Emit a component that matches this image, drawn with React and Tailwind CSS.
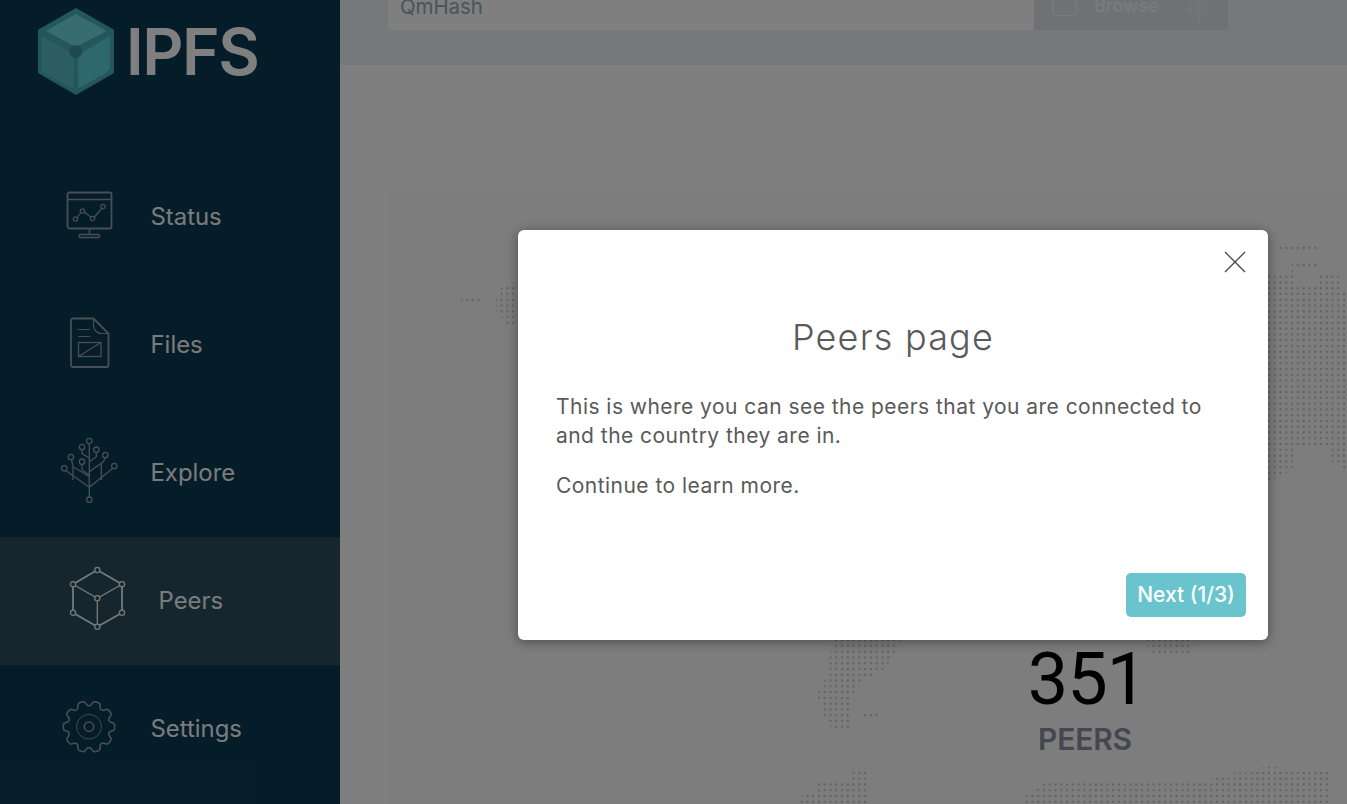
import React from "react";

const INACTIVE = "#8e9ea8";
const ACTIVE = "#f2f2f2";

function Logo() {
  return (
    <svg width="76" height="87" viewBox="0 0 76 87" className="shrink-0">
      <polygon points="38,0 76,21.7 76,65 38,87 0,65 0,21.7" fill="#48aeb6" />
      <polygon points="37.7,6 68.7,23 37.7,39 8,23" fill="#6edade" />
      <polygon points="3.7,28 31,43.7 35.3,50.3 35.3,80.3 3.7,63.7" fill="#5abcc4" />
      <polygon points="40.3,50.3 45.3,43.7 72,28 72,60.3 68,65.3 40.3,80.3" fill="#5ed0d8" />
      <circle cx="37.7" cy="43.7" r="6.5" fill="#3e94a0" />
    </svg>
  );
}

function StatusIcon({ color }) {
  const pts = [[16.5, 32], [23.5, 24], [33.5, 31.5], [44, 19.5]];
  return (
    <svg width="60" height="60" viewBox="0 0 60 60" fill="none" stroke={color} className="shrink-0 overflow-visible">
      <rect x="8.5" y="5.5" width="44" height="36" rx="2" strokeWidth="1.8" />
      <path d="M8.5 12.5H52.5M30.5 41.5V47.5" strokeWidth="1.5" />
      <rect x="20" y="47.5" width="20.5" height="3" rx="1.2" strokeWidth="1.4" />
      <path d="M18 30.5L22 25.5M25.5 25L31.5 30M35.5 30L42.5 21.5" strokeWidth="1.2" />
      {pts.map(([x, y]) => (
        <circle key={x} cx={x} cy={y} r="2.2" strokeWidth="1.2" />
      ))}
    </svg>
  );
}

function FilesIcon({ color }) {
  return (
    <svg width="60" height="60" viewBox="0 0 60 60" fill="none" stroke={color} className="shrink-0 overflow-visible">
      <path d="M14 3.5H34.5L49.5 18.5V50A2 2 0 0 1 47.5 52H14A2 2 0 0 1 12 50V5.5A2 2 0 0 1 14 3.5Z" strokeWidth="1.8" />
      <path d="M34.5 3.5V10A8 8 0 0 0 42.5 18.5H49.5" strokeWidth="1.2" />
      <path d="M19 14.5H31M19 21.5H31" strokeWidth="1.2" />
      <rect x="19.5" y="27.5" width="22.5" height="14" strokeWidth="1.3" />
      <path d="M19.5 41.5L42 27.5" strokeWidth="1.2" />
    </svg>
  );
}

function TreeIcon({ color, size = 60, strokeWidth = 1.3 }) {
  const circles = [[30.3, -2], [23, 4], [37.3, 6.7], [46.3, 12], [55.3, 23], [12, 14], [5.3, 25.3], [23, 18.7], [30.3, 56.7]];
  return (
    <svg width={size} height={size} viewBox="0 0 60 60" fill="none" stroke={color} strokeWidth={strokeWidth} className="shrink-0 overflow-visible">
      <path d="M30.3 .7V54M7 27.7L30.3 44.3M53.5 25.5L30.3 44.3M12.5 16.7L14 23.7L30.3 33.7M14 23.7V37M46.3 14.7L44.3 18.7L30.3 28.7M42.3 20.3V37M23 21.3V27L30.3 32M23 6.7V10.3L30.3 15.3M37.3 9.3V13.7L30.3 18.7" />
      {circles.map(([x, y]) => (
        <circle key={`${x}-${y}`} cx={x} cy={y} r="2.7" />
      ))}
    </svg>
  );
}

function PeersIcon({ color }) {
  const nodes = [[30.3, -1], [55, 13.3], [55, 41.7], [30.3, 55.7], [6, 41.7], [6, 13.3], [30.3, 27.3]];
  return (
    <svg width="60" height="60" viewBox="0 0 60 60" fill="none" stroke={color} className="shrink-0 overflow-visible">
      <path d="M30.3 -1L55 13.3V41.7L30.3 55.7L6 41.7V13.3Z" strokeWidth="1.8" />
      <path d="M6 13.3L30.3 27.3L55 13.3M30.3 27.3V55.7" strokeWidth="1.3" />
      {nodes.map(([x, y]) => (
        <circle key={`${x}-${y}`} cx={x} cy={y} r="2.6" fill="#2a4d5e" strokeWidth="1.3" />
      ))}
    </svg>
  );
}

function gearPath() {
  const points = [];
  for (let i = 0; i < 240; i++) {
    const t = (i / 240) * Math.PI * 2;
    const wave = Math.cos(10 * (t + Math.PI / 2) + Math.PI);
    const r = 23.2 + 2.5 * (Math.tanh(1.8 * wave + 0.5) / Math.tanh(2.3));
    points.push(`${(30 + r * Math.cos(t)).toFixed(2)} ${(27.7 + r * Math.sin(t)).toFixed(2)}`);
  }
  return `M${points.join("L")}Z`;
}

function SettingsIcon({ color }) {
  return (
    <svg width="60" height="60" viewBox="0 0 60 60" fill="none" stroke={color} className="shrink-0 overflow-visible">
      <path d={gearPath()} strokeWidth="1.6" />
      <circle cx="30" cy="27.7" r="12.4" strokeWidth="0.9" />
      <circle cx="30" cy="27.7" r="4.7" strokeWidth="1.5" />
    </svg>
  );
}

function NavItem({ icon: Icon, label, active }) {
  return (
    <div className={`h-[128px] flex items-center gap-[31.5px] shrink-0 ${active ? "pl-[67px] bg-[#2a4d5e]" : "pl-[59px]"}`}>
      <Icon color={active ? ACTIVE : INACTIVE} />
      <span className="text-[23.9px] text-[#f3f6f8] font-['Inter',sans-serif]">{label}</span>
    </div>
  );
}

function MapDots() {
  return (
    <svg
      width="959"
      height="612"
      viewBox="388 192 959 612"
      className="absolute left-0 top-0"
    >
      <defs>
        <pattern id="dots" x="1269" y="294" width="5.77" height="5.77" patternUnits="userSpaceOnUse">
          <circle cx="0" cy="0" r="1.2" fill="#c6c6c6" />
          <circle cx="5.77" cy="0" r="1.2" fill="#c6c6c6" />
          <circle cx="0" cy="5.77" r="1.2" fill="#c6c6c6" />
          <circle cx="5.77" cy="5.77" r="1.2" fill="#c6c6c6" />
        </pattern>
      </defs>
      <g fill="url(#dots)">
        <polygon points="461,297 483,297 483,303 461,303" />
        <polygon points="503,285 518,282 518,325 508,325 496,310 496,297" />
        <polygon points="1280,244 1316,244 1316,250 1280,250" />
        <polygon points="1292,262 1320,262 1320,268 1292,268" />
        <polygon points="1268,275 1296,270 1296,287 1320,285 1320,275 1342,275 1342,291 1347,291 1347,445 1268,445" />
        <polygon points="1268,445 1296,445 1292,470 1268,482" />
        <polygon points="1328,445 1347,445 1347,472 1343,472 1343,463 1332,463" />
        <polygon points="833,640 901,640 898,650 882,672 864,678 852,695 852,730 833,730 823,716 817,695 826,678 828,665" />
        <polygon points="860,713 878,713 878,719 860,719" />
        <polygon points="1147,640 1194,640 1188,655 1150,655" />
        <polygon points="800,797 817,790 817,782 852,782 852,768 870,768 870,804 800,804" />
        <polygon points="1023,804 1023,798 1044,783 1204,782 1232,773 1263,772 1263,767 1279,767 1279,772 1330,772 1330,804" />
      </g>
    </svg>
  );
}

export default function App() {
  return (
    <div className="relative flex w-[1347px] h-[804px] overflow-hidden bg-white font-['Inter',sans-serif]">
      <aside className="w-[340px] shrink-0 flex flex-col bg-[#0b3a53]">
        <div className="h-[153px] shrink-0 flex items-start pl-[38px] pt-[8px] gap-[12px]">
          <Logo />
          <span className="text-[64px] leading-[87px] font-semibold text-white tracking-[-1.5px]">IPFS</span>
        </div>
        <NavItem icon={StatusIcon} label="Status" />
        <NavItem icon={FilesIcon} label="Files" />
        <NavItem icon={TreeIcon} label="Explore" />
        <NavItem icon={PeersIcon} label="Peers" active />
        <NavItem icon={SettingsIcon} label="Settings" />
      </aside>

      <main className="flex-1 min-w-0 flex flex-col bg-white">
        <header className="h-[65px] shrink-0 bg-[#ebf3f7] flex items-end pl-[48px] pb-[35px] overflow-hidden">
          <div className="flex w-[840px] h-[50px] shrink-0 rounded-[4px] overflow-hidden">
            <div className="w-[646px] bg-white pl-[12px] flex items-center pt-[4px] text-[#95a8b5] text-[20.4px]">QmHash</div>
            <div className="flex-1 bg-[#e0e2e8] flex items-center pl-[18px] gap-[17px] text-[#f4f5f8] text-[18px] font-semibold">
              <svg width="25" height="30" viewBox="0 0 25 30" fill="none" stroke="#f4f5f8" strokeWidth="1.2" className="shrink-0 mt-[-8px]">
                <rect x="0.6" y="0.6" width="23.8" height="28.8" rx="4" />
                <path d="M.6 12H24.4" />
              </svg>
              <span className="w-[63px]">Browse</span>
              <span className="ml-[11px] flex mt-[9px]">
                <TreeIcon color="#f4f5f8" size={28} strokeWidth={1.6} />
              </span>
            </div>
          </div>
        </header>
        <section className="h-[127px] shrink-0" />
        <section className="relative flex-1 ml-[48px] bg-[#fafafa]">
          <MapDots />
          <div className="absolute left-[597px] top-[452px] w-[200px] flex flex-col items-center">
            <span className="ml-[4px] text-[72px] leading-[72px] tracking-[-1px] text-black font-['Roboto',sans-serif]">351</span>
            <span className="text-[30px] leading-[36px] font-semibold tracking-[-0.2px] text-[#888e9f] mt-[5px]">PEERS</span>
          </div>
        </section>
      </main>

      <div className="absolute inset-0 bg-black/50">
        <div className="relative ml-[518px] mt-[230px] w-[750px] h-[410px] rounded-[6px] bg-white shadow-[0_2px_12px_rgba(0,0,0,0.4)] text-[#5a5a5a] font-['Inter',sans-serif]">
          <svg width="24" height="24" viewBox="0 0 24 24" fill="none" stroke="#444" strokeWidth="1.3" className="absolute right-[21px] top-[20px]">
            <path d="M2 2L22 22M22 2L2 22" />
          </svg>
          <div className="flex flex-col h-full pl-[38px] pr-[22px] pt-[87px] pb-[23px]">
            <h2 className="text-[36px] leading-[40px] font-light tracking-[1.2px] text-center pr-[16px]">Peers page</h2>
            <p className="mt-[35px] text-[21px] leading-[29px] tracking-[0.46px]">
              This is where you can see the peers that you are connected to<br />and the country they are in.
            </p>
            <p className="mt-[21px] text-[21px] leading-[29px] tracking-[0.46px]">Continue to learn more.</p>
            <div className="mt-auto flex justify-end">
              <div className="w-[120px] h-[44px] rounded-[5px] bg-[#69c4cd] text-white text-[21px] font-medium flex items-center justify-center">Next (1/3)</div>
            </div>
          </div>
        </div>
      </div>
    </div>
  );
}
